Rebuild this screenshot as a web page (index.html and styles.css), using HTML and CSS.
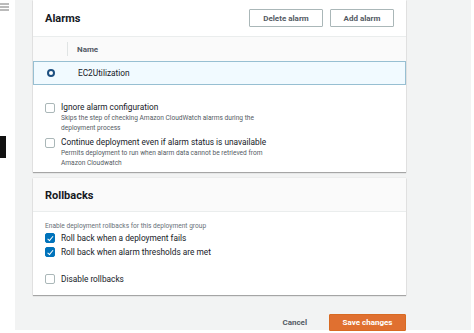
FILE: index.html
```html
<!DOCTYPE html>
<html lang="en">
<head>
<meta charset="UTF-8" />
<title>Edit deployment group</title>
<link rel="stylesheet" href="styles.css">
</head>
<body>

<div class="nav">
  <svg class="burger" width="9" height="8" viewBox="0 0 9 8">
    <path d="M0 1h9M0 4h9M0 7h9" stroke="#777" stroke-width="1" fill="none" />
  </svg>
  <div class="nav-tab"></div>
</div>

<div class="main">
  <div class="card alarms">
    <div class="card-head">
      <h2>Alarms</h2>
      <div class="actions">
        <button class="btn">Delete alarm</button>
        <button class="btn">Add alarm</button>
      </div>
    </div>
    <div class="table-head">
      <span class="col-sel"></span>
      <span class="col-name">Name</span>
    </div>
    <div class="table-row selected">
      <span class="col-sel"><span class="radio"></span></span>
      <span class="col-name">EC2Utilization</span>
    </div>
    <div class="options">
      <label class="check">
        <span class="box"></span>
        <span class="check-text">
          <span class="check-label">Ignore alarm configuration</span>
          <span class="check-desc">Skips the step of checking Amazon CloudWatch alarms during the deployment process</span>
        </span>
      </label>
      <label class="check">
        <span class="box"></span>
        <span class="check-text">
          <span class="check-label">Continue deployment even if alarm status is unavailable</span>
          <span class="check-desc">Permits deployment to run when alarm data cannot be retrieved from Amazon Cloudwatch</span>
        </span>
      </label>
    </div>
  </div>

  <div class="card rollbacks">
    <div class="card-head grey">
      <h2>Rollbacks</h2>
    </div>
    <div class="card-body">
      <p class="hint">Enable deployment rollbacks for this deployment group</p>
      <label class="check tight"><span class="box on"></span><span class="check-label">Roll back when a deployment fails</span></label>
      <label class="check tight"><span class="box on"></span><span class="check-label">Roll back when alarm thresholds are met</span></label>
      <label class="check tight spaced"><span class="box"></span><span class="check-label">Disable rollbacks</span></label>
    </div>
  </div>

  <div class="footer">
    <button class="link-btn">Cancel</button>
    <button class="primary">Save changes</button>
  </div>
</div>

</body>
</html>
```

FILE: styles.css
```css
body { margin: 0; background: #fff; font-family: Roboto, "Liberation Sans", sans-serif; color: #16191f; display: flex; height: 333px; overflow: hidden; }
.nav { width: 15px; flex-shrink: 0; display: flex; flex-direction: column; }
.burger { margin: 3px 0 0 0; }
.nav-tab { width: 6px; height: 22px; background: #111; margin-top: 125px; }
.main { width: 456px; height: 330px; background: #f2f3f3; padding-left: 18px; box-sizing: border-box; display: flex; flex-direction: column; }
.card { width: 373px; background: #fff; box-shadow: 0 1px 1px rgba(0,0,0,.3), 0 0 1px rgba(0,0,0,.15); }
.card-head { display: flex; align-items: center; justify-content: space-between; padding: 0 12px; height: 36px; box-sizing: border-box; }
.card-head.grey { background: #fafafa; height: 34px; padding-top: 2px; border-bottom: 1px solid #eaeded; }
h2 { margin: 0; font-size: 11px; font-weight: bold; }
.actions { display: flex; gap: 7px; }
.btn { height: 18px; padding: 0 12px; background: #fff; border: 1px solid #aab7b8; border-radius: 1px; font: bold 8px Roboto, "Liberation Sans", sans-serif; color: #545b64; }
.alarms .btn:first-child { width: 74px; }
.alarms .btn:last-child { width: 64px; }
.table-head, .table-row { display: flex; align-items: center; height: 25px; box-sizing: border-box; font-size: 8px; }
.table-head { border-top: 1px solid #eaeded; color: #545b64; font-weight: bold; background: #fafafa; }
.table-head .col-name { border-left: 1px solid #e0e4e4; padding-left: 9px; height: 14px; display: flex; align-items: center; }
.col-sel { width: 34px; display: flex; justify-content: center; }
.table-row { height: 24px; color: #16191f; font-size: 8.3px; font-weight: normal; }
.table-row .col-name { padding-left: 10px; }
.selected { background: #f1faff; border: 1px solid #97bfd2; }
.radio { width: 4px; height: 4px; border: 2.5px solid #1d4f80; border-radius: 50%; background: #fff; }
.options { padding: 16px 12px 4px; display: flex; flex-direction: column; gap: 3px; }
.check { display: flex; align-items: flex-start; gap: 6px; }
.box { width: 8px; height: 8px; border: 1px solid #aab7b8; border-radius: 2px; flex-shrink: 0; margin-top: 2px; background: #fff; position: relative; }
.box.on { background: #0073bb; border-color: #0073bb; }
.box.on::after { content: ""; position: absolute; left: 2.5px; top: 0.5px; width: 2px; height: 4.5px; border: solid #fff; border-width: 0 1.3px 1.3px 0; transform: rotate(40deg); }
.check-text { display: flex; flex-direction: column; }
.check-label { font-size: 8.3px; line-height: 13px; }
.check-desc { font-size: 6.6px; line-height: 9.5px; color: #545b64; max-width: 215px; }
.rollbacks { margin-top: 6px; }
.card-body { padding: 10px 12px 9px; }
.hint { margin: 0; font-size: 6.6px; color: #687078; line-height: 9px; }
.check.tight { align-items: center; height: 14px; }
.check.tight .box { margin-top: 0; }
.check.spaced { margin-top: 13px; }
.footer { width: 373px; display: flex; justify-content: flex-end; align-items: center; gap: 22px; margin-top: auto; margin-bottom: -1px; }
.link-btn { border: 0; background: none; font: bold 8px Roboto, "Liberation Sans", sans-serif; color: #545b64; padding: 0; }
.primary { width: 77px; height: 17px; border: 1px solid #d86a22; background: #e07030; color: #fff; font: bold 8px Roboto, "Liberation Sans", sans-serif; border-radius: 1px; }
```
